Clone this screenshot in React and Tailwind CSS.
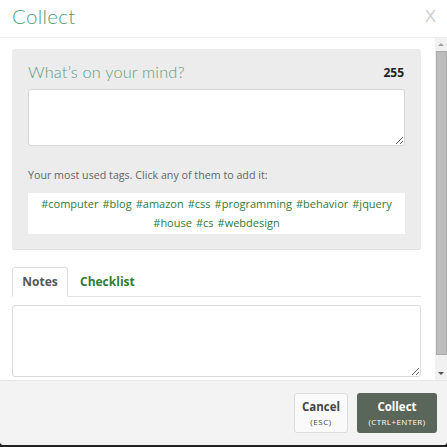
import { useState } from "react";

const TAGS_ONE = ["computer", "blog", "amazon", "css", "programming", "behavior", "jquery"];
const TAGS_TWO = ["house", "cs", "webdesign"];

function Tag({ name }) {
  return <span className="mx-[2px] cursor-pointer">#{name}</span>;
}

export default function App() {
  const [tab, setTab] = useState("notes");
  const [text, setText] = useState("");

  return (
    <div className="w-[447px] h-[447px] bg-[#222] overflow-hidden font-['Open_Sans',sans-serif]">
      <div className="h-[445px] bg-white rounded-b-[4px] flex flex-col overflow-hidden">
        {/* Header */}
        <div className="h-[38px] shrink-0 border-b border-[#ececec] flex items-center justify-between pl-[12px] pr-[11px]">
          <h1 className="text-[20.5px] font-light text-[#4f9f77] font-['Lato',sans-serif] tracking-[0.3px] -mt-[4px]">
            Collect
          </h1>
          <button className="text-[17px] text-[#cfcfcf] font-['Liberation_Sans',sans-serif] -mt-[4px]">X</button>
        </div>

        {/* Body with scrollbar */}
        <div className="flex-1 flex min-h-0">
          <div className="w-[435px] shrink-0 pl-[12px] pr-[14px] pt-[11px]">
            {/* Gray panel */}
            <div className="bg-[#ebeceb] rounded-[3px] border-b border-[#e0e1e0] px-[16px] pt-[12px] pb-[15px]">
              <div className="flex items-center justify-between h-[23px]">
                <span className="text-[16.3px] font-light text-[#5f9b84] font-['Lato',sans-serif] tracking-[0.2px]">
                  What’s on your mind?
                </span>
                <span className="text-[12px] font-bold text-[#222] pr-[1px]">{255 - text.length}</span>
              </div>
              <textarea
                value={text}
                onChange={(e) => setText(e.target.value)}
                className="mt-[5px] block w-full h-[57px] bg-white border border-[#d6d6d6] rounded-[3px] outline-none resize-y"
              />
              <p className="mt-[21px] text-[10.7px] leading-[16px] text-[#666]">
                Your most used tags. Click any of them to add it:
              </p>
              <div className="mt-[10px] bg-white pt-[1px] pb-[2px] text-center text-[11px] leading-[19px] text-[#2f7a3a]">
                <div>
                  {TAGS_ONE.map((t) => (
                    <Tag key={t} name={t} />
                  ))}
                </div>
                <div>
                  {TAGS_TWO.map((t) => (
                    <Tag key={t} name={t} />
                  ))}
                </div>
              </div>
            </div>

            {/* Tabs */}
            <div className="mt-[17px] flex border-b border-[#e2e2e2] h-[30px]">
              <button
                onClick={() => setTab("notes")}
                className={`w-[56px] -mb-px text-[12px] font-bold rounded-t-[3px] ${
                  tab === "notes"
                    ? "bg-white border border-[#dedede] border-b-white text-[#555]"
                    : "text-[#2f7d32]"
                }`}
              >
                Notes
              </button>
              <button
                onClick={() => setTab("checklist")}
                className={`px-[12px] -mb-px text-[12px] font-bold rounded-t-[3px] ${
                  tab === "checklist"
                    ? "bg-white border border-[#dedede] border-b-white text-[#555]"
                    : "text-[#2f7d32]"
                }`}
              >
                Checklist
              </button>
            </div>
            <textarea className="mt-[8px] block w-full h-[72px] bg-white border border-[#d9d9d9] rounded-[3px] outline-none resize-y" />
          </div>

          {/* Scrollbar */}
          <div className="w-[12px] shrink-0 bg-[#f1f1f1] flex flex-col pt-[5px] pb-[5px]">
            <div className="h-[3px] flex justify-center">
              <span className="block w-0 h-0 border-l-[3px] border-r-[3px] border-b-[3px] border-l-transparent border-r-transparent border-b-[#a3a3a3]" />
            </div>
            <div className="mt-[5px] ml-[1px] h-[304px] shrink-0 bg-[#bdbdbd] border border-[#aaaaaa]" />
            <div className="flex-1" />
            <div className="h-[3px] flex justify-center">
              <span className="block w-0 h-0 border-l-[3px] border-r-[3px] border-t-[3px] border-l-transparent border-r-transparent border-t-[#505050]" />
            </div>
          </div>
        </div>

        {/* Footer */}
        <div className="h-[65px] shrink-0 bg-[#f3f3f3] border-t border-[#e6e6e6] flex items-center justify-end gap-[9px] pr-[10px]">
          <button className="w-[54px] h-[40px] bg-[#fafafa] border border-[#dcdcdc] rounded-[3px] flex flex-col items-center justify-center text-[#444]">
            <span className="text-[11.5px] font-bold leading-[15px]">Cancel</span>
            <span className="text-[8px] leading-[12px] mt-[2px] tracking-[0.6px]">(ESC)</span>
          </button>
          <button className="w-[80px] h-[40px] bg-[#5a6659] rounded-[3px] flex flex-col items-center justify-center text-white">
            <span className="text-[11.5px] font-bold leading-[15px]">Collect</span>
            <span className="text-[8px] leading-[12px] mt-[2px] tracking-[0.4px]">(CTRL+ENTER)</span>
          </button>
        </div>
      </div>
    </div>
  );
}
